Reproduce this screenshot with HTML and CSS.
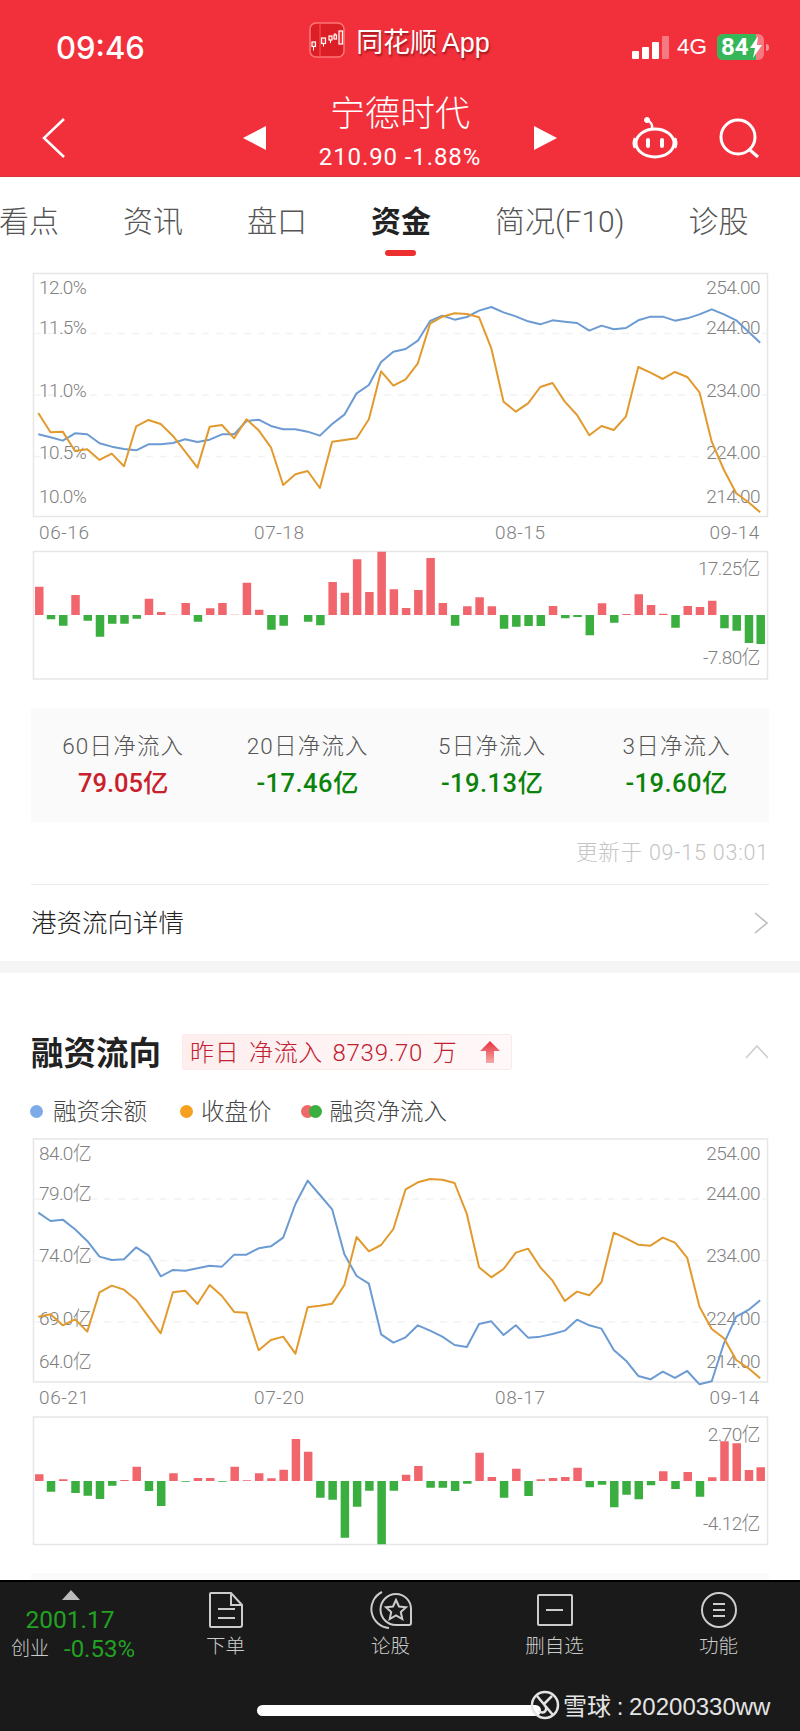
FILE: index.html
```html
<!DOCTYPE html>
<html lang="zh-CN">
<head>
    <meta charset="UTF-8">
    <title>宁德时代 资金</title>
    <link rel="stylesheet" href="styles.css">
</head>
<body>
<div class="page">
    <!--顶部红色区域-->
    <header class="top">
        <div class="status">
            <span class="time">09:46</span>
            <div class="app-name">
                <svg class="app-logo" width="36" height="36" viewBox="0 0 36 36">
                    <rect x="1" y="1" width="34" height="34" rx="6" fill="#dc1f26" stroke="#f77" stroke-width="1.5"/>
                    <path d="M11 1V35" stroke="#f55" stroke-width="1"/>
                    <g fill="#e33" stroke="#fff" stroke-width="1.200">
                        <rect x="3" y="20" width="3.500" height="4.500"/>
                        <rect x="12.500" y="16" width="4" height="5.500"/>
                        <rect x="20" y="14" width="3" height="4"/>
                        <rect x="25" y="13" width="2.500" height="4"/>
                        <rect x="30" y="9" width="3.500" height="13"/>
                    </g>
                    <path d="M4.500 24.500v4M14.500 21.500v3M21.500 18v3M26 11v2" stroke="#fff"/>
                </svg>
                <span class="app-text">同花顺 App</span>
            </div>
            <div class="signal">
                <div class="bars">
                    <i class="bar b1"></i><i class="bar b2"></i><i class="bar b3"></i><i class="bar b4"></i>
                </div>
                <span class="net">4G</span>
                <div class="battery">
                    <div class="battery-fill"></div>
                    <span class="battery-num">84</span>
                    <svg class="bolt" width="12" height="22" viewBox="0 0 12 22"><path d="M8 0L0 12h5L3 22l9-13H7z" fill="#fff"/></svg>
                </div>
                <i class="nub"></i>
            </div>
        </div>
        <div class="nav">
            <div class="nav-left">
                <svg width="26" height="42" viewBox="0 0 26 42"><path d="M23 2L3 21l20 19" fill="none" stroke="#fff" stroke-width="2.5"/></svg>
            </div>
            <div class="nav-mid">
                <i class="tri tri-l"></i>
                <div class="stock">
                    <div class="stock-name">宁德时代</div>
                    <div class="stock-price">210.90 -1.88%</div>
                </div>
                <i class="tri tri-r"></i>
            </div>
            <div class="nav-right">
                <svg width="48" height="44" viewBox="0 0 48 44" fill="none" stroke="#fff">
                    <ellipse cx="24" cy="27" rx="19" ry="14" stroke-width="3"/>
                    <path d="M21 13C22 9 20 6 16 4" stroke-width="2.500"/>
                    <circle cx="16" cy="4" r="2.500" fill="#fff"/>
                    <rect x="15" y="22" width="4" height="10" rx="2" fill="#fff" stroke="none"/>
                    <rect x="29" y="22" width="4" height="10" rx="2" fill="#fff" stroke="none"/>
                    <path d="M4 22q-2.500 5 0 10M44 22q2.500 5 0 10" stroke-width="2.500"/>
                </svg>
                <svg width="46" height="46" viewBox="0 0 46 46">
                    <circle cx="22" cy="22" r="17" fill="none" stroke="#fff" stroke-width="3"/>
                    <path d="M34 35l8 7" stroke="#fff" stroke-width="3"/>
                </svg>
            </div>
        </div>
    </header>

    <!--标签-->
    <nav class="tabs">
        <span class="tab">看点</span>
        <span class="tab">资讯</span>
        <span class="tab">盘口</span>
        <span class="tab current">资金</span>
        <span class="tab">简况(F10)</span>
        <span class="tab">诊股</span>
    </nav>

    <!--港资走势-->
    <svg class="chart" width="800" height="275" viewBox="0 0 800 275">
        <rect class="frame" x="33.5" y="8.5" width="734" height="243"/>
        <path class="grid" d="M34 68.5H767M34 130H767M34 191.5H767"/>
        <text class="axis" x="39" y="29">12.0%</text>
        <text class="axis" x="39" y="69">11.5%</text>
        <text class="axis" x="39" y="132">11.0%</text>
        <text class="axis" x="39" y="194">10.5%</text>
        <text class="axis" x="39" y="238">10.0%</text>
        <text class="axis end" x="760" y="29">254.00</text>
        <text class="axis end" x="760" y="69">244.00</text>
        <text class="axis end" x="760" y="132">234.00</text>
        <text class="axis end" x="760" y="194">224.00</text>
        <text class="axis end" x="760" y="238">214.00</text>
        <text class="axis date" x="39" y="273.500">06-16</text>
        <text class="axis date" x="254" y="273.500">07-18</text>
        <text class="axis date" x="495" y="273.500">08-15</text>
        <text class="axis date end" x="760" y="273.500">09-14</text>
        <g transform="scale(.5102 .3333)">
            <polyline class="line blue" points="75,508 99,517 123,527 147,505 171,508 195,535 219,545 243,552 267,556 291,538 315,538 339,534 363,523 387,531 411,524 435,508 459,508 483,468 507,464 531,483 555,493 579,493 603,500 627,512 651,477 675,449 699,385 723,360 747,291 771,260 795,252 819,227 843,168 867,152 891,164 915,156 939,137 963,126 987,142 1011,154 1035,169 1059,178 1083,166 1107,170 1131,174 1155,197 1179,182 1203,193 1227,189 1251,166 1275,155 1299,155 1323,167 1347,160 1371,148 1395,133 1419,148 1443,166 1467,200 1490,233"/>
            <polyline class="line orange" points="75,444 99,502 123,500 147,558 171,553 195,585 219,566 243,604 267,484 291,465 315,477 339,513 363,560 387,608 411,485 435,480 459,520 483,463 507,496 531,547 555,660 579,628 603,618 627,669 651,530 675,525 699,520 723,463 747,319 771,362 795,343 819,295 843,176 867,155 891,145 915,147 939,157 963,250 987,410 1011,440 1035,415 1059,366 1083,354 1107,410 1131,450 1155,511 1179,483 1203,495 1227,454 1251,306 1275,323 1299,342 1323,321 1347,336 1371,382 1395,530 1419,615 1443,685 1467,712 1490,742"/>
        </g>
    </svg>
    <svg class="chart" width="800" height="150" viewBox="0 0 800 150">
        <rect class="frame" x="33.5" y="11.5" width="734" height="127.5"/>
        <g transform="scale(.5102 .3333)">
            <path class="vol red" d="M77 225V140M148 225V165M292 225V176M316 225V216M364 225V189M412 225V205M436 225V189M484 225V128M508 225V209M652 225V126M676 225V158M700 225V58M724 225V156M748 225V35M772 225V148M796 225V204M820 225V150M844 225V54M868 225V189M916 225V199M940 225V172M964 225V199M1084 225V198M1180 225V190M1228 225V222M1252 225V163M1276 225V195M1300 225V221M1348 225V198M1372 225V201M1396 225V182"/>
            <path class="vol pale" d="M340 225V223M460 225V222"/>
            <path class="vol green" d="M100 225V238M124 225V257M172 225V242M196 225V290M220 225V251M244 225V251M268 225V236M388 225V245M532 225V269M556 225V257M604 225V245M628 225V256M892 225V257M988 225V266M1012 225V260M1036 225V258M1060 225V258M1108 225V235M1132 225V231M1156 225V286M1204 225V248M1324 225V263M1420 225V265M1444 225V272M1468 225V309M1491 225V312"/>
        </g>
        <text class="axis end" x="760" y="35">17.25亿</text>
        <text class="axis end" x="760" y="124">-7.80亿</text>
    </svg>

    <section class="stats">
        <div class="stat"><div class="stat-name">60日净流入</div><div class="stat-val up">79.05亿</div></div>
        <div class="stat"><div class="stat-name">20日净流入</div><div class="stat-val down">-17.46亿</div></div>
        <div class="stat"><div class="stat-name">5日净流入</div><div class="stat-val down">-19.13亿</div></div>
        <div class="stat"><div class="stat-name">3日净流入</div><div class="stat-val down">-19.60亿</div></div>
    </section>
    <div class="updated">更新于 09-15 03:01</div>
    <div class="detail">
        <span>港资流向详情</span>
        <svg width="16" height="22" viewBox="0 0 16 22"><path d="M2 1l12 10L2 21" fill="none" stroke="#bbb" stroke-width="1.5"/></svg>
    </div>
    <div class="sep"></div>

    <!--融资流向-->
    <div class="sec-head">
        <h2 class="sec-title">融资流向</h2>
        <div class="tag">
            <span>昨日 净流入 8739.70 万</span>
            <svg width="20" height="22" viewBox="0 0 20 22">
                <defs><linearGradient id="arrowFill" x1="0" y1="0" x2="0" y2="1"><stop offset="0" stop-color="#e8303a"/><stop offset="1" stop-color="#f6aaaa"/></linearGradient></defs>
                <path d="M10 0l10 10h-6v12H6V10H0z" fill="url(#arrowFill)"/>
            </svg>
        </div>
        <svg class="fold" width="24" height="14" viewBox="0 0 24 14"><path d="M1 13L12 1l11 12" fill="none" stroke="#ccc" stroke-width="1.5"/></svg>
    </div>
    <div class="legend">
        <span class="leg"><i class="dot c-blue"></i>融资余额</span>
        <span class="leg"><i class="dot c-orange"></i>收盘价</span>
        <span class="leg leg-net"><i class="dot c-red"></i><i class="dot c-green"></i>融资净流入</span>
    </div>
    <svg class="chart" width="800" height="280" viewBox="0 0 800 280">
        <rect class="frame" x="33.5" y="9" width="734" height="243"/>
        <path class="grid" d="M34 69H767M34 130.5H767M34 192H767"/>
        <text class="axis" x="39" y="30">84.0亿</text>
        <text class="axis" x="39" y="70">79.0亿</text>
        <text class="axis" x="39" y="132">74.0亿</text>
        <text class="axis" x="39" y="195">69.0亿</text>
        <text class="axis" x="39" y="238">64.0亿</text>
        <text class="axis end" x="760" y="30">254.00</text>
        <text class="axis end" x="760" y="70">244.00</text>
        <text class="axis end" x="760" y="132">234.00</text>
        <text class="axis end" x="760" y="195">224.00</text>
        <text class="axis end" x="760" y="238">214.00</text>
        <text class="axis date" x="39" y="273.500">06-21</text>
        <text class="axis date" x="254" y="273.500">07-20</text>
        <text class="axis date" x="495" y="273.500">08-17</text>
        <text class="axis date end" x="760" y="273.500">09-14</text>
        <g transform="scale(.5102 .3333)">
            <polyline class="line blue" points="75,248 99,273 123,269 147,298 171,333 195,380 219,390 243,388 267,352 291,376 315,439 339,420 363,422 387,415 411,407 435,410 459,374 483,374 507,355 531,349 555,323 579,222 603,152 627,195 651,238 675,373 699,438 723,461 747,613 771,638 795,622 819,586 843,602 867,620 891,645 915,651 939,582 963,574 987,615 1011,586 1035,623 1059,620 1083,612 1107,602 1131,569 1155,586 1179,596 1203,660 1227,692 1251,738 1275,748 1299,725 1323,744 1347,723 1371,763 1395,754 1419,640 1443,560 1467,540 1490,511"/>
            <polyline class="line orange" points="75,560 99,553 123,586 147,568 171,605 195,487 219,467 243,479 267,510 291,560 315,610 339,487 363,482 387,522 411,465 435,498 459,546 483,548 507,661 531,630 555,620 579,671 603,532 627,527 651,521 675,465 699,321 723,364 747,345 771,297 795,178 819,157 843,147 867,149 891,159 915,252 939,412 963,442 987,417 1011,368 1035,356 1059,412 1083,452 1107,513 1131,485 1155,496 1179,456 1203,308 1227,325 1251,344 1275,347 1299,323 1323,338 1347,384 1371,530 1395,597 1419,625 1443,690 1467,715 1490,745"/>
        </g>
    </svg>
    <svg class="chart" width="800" height="150" viewBox="0 0 800 150">
        <rect class="frame" x="33.5" y="7" width="734" height="127.5"/>
        <g transform="scale(.5102 .3333)">
            <path class="vol red" d="M77 213V193M124 213V208M244 213V210M268 213V170M340 213V190M388 213V204M412 213V204M460 213V170M484 213V211M508 213V190M532 213V205M556 213V179M580 213V87M604 213V125M796 213V194M820 213V168M940 213V128M964 213V201M1012 213V176M1060 213V208M1084 213V204M1108 213V201M1132 213V173M1300 213V184M1348 213V186M1396 213V202M1420 213V94M1444 213V100M1468 213V180M1491 213V172"/>
            <path class="vol green" d="M100 213V245M148 213V249M172 213V257M196 213V267M220 213V227M292 213V243M316 213V288M364 213V215M436 213V215M628 213V263M652 213V269M676 213V383M700 213V290M724 213V242M748 213V403M772 213V242M844 213V233M868 213V233M892 213V243M916 213V221M988 213V263M1036 213V258M1156 213V232M1180 213V224M1204 213V292M1228 213V254M1252 213V268M1276 213V226M1324 213V237M1372 213V260"/>
        </g>
        <text class="axis end" x="760" y="31">2.70亿</text>
        <text class="axis end" x="760" y="120">-4.12亿</text>
    </svg>
    <div class="fade"></div>

    <!--底部工具栏-->
    <footer class="toolbar">
        <div class="quote">
            <i class="quote-tri"></i>
            <div class="quote-num">2001.17</div>
            <div class="quote-row"><span class="quote-name">创业</span><span class="quote-pct">-0.53%</span></div>
        </div>
        <div class="tool">
            <svg width="36" height="38" viewBox="0 0 36 38" fill="none" stroke="#ccc" stroke-width="2">
                <path d="M3 2H23L34 14V34a2 2 0 0 1-2 2H3a1 1 0 0 1-1-1V3a1 1 0 0 1 1-1z"/>
                <path d="M23 2V14H34"/>
                <path d="M10 18H27M10 27H27"/>
            </svg>
            <span>下单</span>
        </div>
        <div class="tool">
            <svg width="42" height="38" viewBox="0 0 42 38" fill="none" stroke="#ccc" stroke-width="2">
                <path d="M26 3a15 15 0 0 0 0 31H39a2 2 0 0 0 2-2V18A15 15 0 0 0 26 3z"/>
                <path d="M12 1A19 19 0 0 0 19 37"/>
                <path d="M26 9l3 6.500 7 .8-5.200 4.700 1.500 7-6.300-3.600-6.300 3.600 1.500-7-5.200-4.700 7-.8z"/>
            </svg>
            <span>论股</span>
        </div>
        <div class="tool">
            <svg width="38" height="38" viewBox="0 0 38 38" fill="none" stroke="#ccc" stroke-width="2">
                <rect x="2" y="4" width="34" height="30" rx="1"/>
                <path d="M10 19H27"/>
            </svg>
            <span>删自选</span>
        </div>
        <div class="tool">
            <svg width="38" height="38" viewBox="0 0 38 38" fill="none" stroke="#ccc" stroke-width="2">
                <circle cx="19" cy="19" r="17"/>
                <path d="M13 13H25M13 19H25M13 25H25"/>
            </svg>
            <span>功能</span>
        </div>
        <i class="home-bar"></i>
        <div class="mark">
            <svg width="30" height="30" viewBox="0 0 30 30" fill="none" stroke="#e4e4e4" stroke-width="2.500">
                <circle cx="15" cy="15" r="13"/>
                <path d="M7 6L23 25M22 6L13 15M14 15a4 4 0 1 1-5 6"/>
            </svg>
            <span>雪球 : 20200330ww</span>
        </div>
    </footer>
</div>
</body>
</html>
```

FILE: styles.css
```css
html,body{
    margin:0;
    padding:0;
    background:#fff;
}
body{
    font-family:Roboto,"Noto Sans CJK SC",sans-serif;
}
i{
    display:block;
}
.page{
    position:relative;
    width:800px;
    height:1731px;
    overflow:hidden;
}

/* 顶部 */
.top{
    height:177px;
    background:#f2303c;
    color:#fff;
    box-shadow:inset 0 -1px 0 #d8333c;
}
.status{
    display:flex;
    align-items:center;
    justify-content:space-between;
    height:94px;
    padding:0 31px 0 56px;
    box-sizing:border-box;
}
.time{
    font-family:Inter,Roboto,sans-serif;
    font-size:31px;
    font-weight:500;
}
.app-name{
    display:flex;
    align-items:center;
    gap:11px;
    margin:-14px 0 0 22px;
}
.app-text{
    font-family:"Liberation Sans","Noto Sans CJK SC",sans-serif;
    font-size:27px;
    word-spacing:-3px;
    text-shadow:1px 2px 2px rgba(80,0,0,.55);
}
.signal{
    display:flex;
    align-items:center;
}
.bars{
    display:flex;
    align-items:flex-end;
    gap:3px;
    height:24px;
    margin-right:8px;
}
.bar{
    width:7px;
    background:#fff;
    border-radius:1px;
}
.b1{height:8px;}
.b2{height:12px;}
.b3{height:17px;}
.b4{height:23px;background:rgba(255,255,255,.35);}
.net{
    font-family:"Liberation Sans",sans-serif;
    font-size:22.5px;
    margin-right:10px;
}
.battery{
    position:relative;
    width:47px;
    height:26px;
    border-radius:6px;
    background:rgba(255,255,255,.35);
    overflow:hidden;
}
.battery-fill{
    width:39px;
    height:26px;
    background:#35b658;
}
.battery-num{
    position:absolute;
    left:4px;
    top:-2px;
    font-size:24px;
    font-weight:700;
    line-height:30px;
}
.bolt{
    position:absolute;
    left:33px;
    top:2px;
}
.nub{
    width:3px;
    height:7px;
    margin-left:2px;
    background:rgba(255,255,255,.45);
    border-radius:0 3px 3px 0;
}
.nav{
    display:grid;
    grid-template-columns:1fr auto 1fr;
    align-items:center;
    height:83px;
}
.nav-left{
    padding-left:41px;
    line-height:0;
}
.nav-mid{
    display:flex;
    align-items:center;
    gap:50px;
}
.tri{
    width:0;
    height:0;
    border-top:12px solid transparent;
    border-bottom:12px solid transparent;
}
.tri-l{border-right:23px solid #fff;}
.tri-r{border-left:23px solid #fff;}
.stock{
    width:168px;
    margin-bottom:9px;
    text-align:center;
}
.stock-name{
    font-size:35px;
    line-height:42px;
    font-weight:300;
    white-space:nowrap;
}
.stock-price{
    margin-top:6px;
    font-size:24px;
    line-height:30px;
    letter-spacing:.9px;
    white-space:nowrap;
}
.nav-right{
    display:flex;
    justify-content:flex-end;
    align-items:center;
    gap:37px;
    padding-right:38px;
}

/* 标签 */
.tabs{
    display:flex;
    gap:64px;
    height:88px;
    margin-left:-1px;
    padding-top:24px;
    box-sizing:border-box;
    font-size:30px;
    line-height:42px;
    font-weight:300;
    color:#555;
    white-space:nowrap;
}
.tab{
    position:relative;
}
.tab.current{
    color:#222;
    font-weight:700;
}
.tab.current:after{
    content:"";
    position:absolute;
    left:14px;
    top:49px;
    width:31px;
    height:6px;
    border-radius:3px;
    background:#ee2f2f;
}

/* 图表 */
.chart{
    display:block;
    overflow:visible;
    font-family:Roboto,"Noto Sans CJK SC",sans-serif;
}
.frame{
    fill:none;
    stroke:#e6e6e6;
    stroke-width:1.500;
}
.grid{
    fill:none;
    stroke:#f2f2f2;
    stroke-width:1.500;
    stroke-dasharray:7 7;
}
.axis{
    font-size:19px;
    font-weight:300;
    letter-spacing:-.6px;
    fill:#808080;
}
.date{
    letter-spacing:.6px;
}
.end{
    text-anchor:end;
}
.line{
    fill:none;
    stroke-width:2px;
    vector-effect:non-scaling-stroke;
    stroke-linejoin:round;
}
.blue{stroke:#6b9bd2;}
.orange{stroke:#e29a2e;}
.vol{
    fill:none;
    stroke-width:8.500px;
    vector-effect:non-scaling-stroke;
}
.red{stroke:#f0666c;}
.pale{stroke:#f8d8d8;}
.green{stroke:#3aae3e;}

/* 净流入 */
.stats{
    display:grid;
    grid-template-columns:repeat(4,1fr);
    width:738px;
    height:114px;
    margin:18px 0 0 31px;
    padding-top:21px;
    box-sizing:border-box;
    background:#fafafa;
    text-align:center;
}
.stat-name{
    font-size:22.500px;
    line-height:34px;
    font-weight:300;
    letter-spacing:1.2px;
    color:#555;
}
.stat-val{
    margin-top:1px;
    font-size:25.500px;
    line-height:38px;
    font-weight:500;
}
.up{color:#c9202c;}
.down{color:#0b830b;letter-spacing:.5px;}
.updated{
    width:738px;
    margin-left:31px;
    padding-top:16px;
    text-align:right;
    font-size:21.500px;
    line-height:30px;
    font-weight:300;
    letter-spacing:.8px;
    color:#c4c4c4;
}
.detail{
    display:flex;
    align-items:center;
    justify-content:space-between;
    width:738px;
    height:77px;
    margin:16px 0 0 31px;
    padding-bottom:6px;
    border-top:1px solid #eaeaea;
    box-sizing:border-box;
    font-size:25.500px;
    font-weight:300;
    color:#222;
}
.detail svg{
    margin-top:6px;
}
.sep{
    height:12px;
    background:#f5f5f5;
}

/* 融资流向 */
.sec-head{
    display:flex;
    align-items:center;
    width:738px;
    height:36px;
    margin:61px 0 0 31px;
}
.sec-title{
    margin:-4px 0 0;
    width:151px;
    font-size:32.500px;
    font-weight:700;
    white-space:nowrap;
    color:#222;
}
.tag{
    display:flex;
    align-items:center;
    justify-content:space-between;
    width:330px;
    height:36px;
    padding:0 11px 3px 7px;
    box-sizing:border-box;
    border:1px solid #fbeaea;
    border-radius:3px;
    background:linear-gradient(90deg,#feeeee,#fff8f8);
    font-size:24px;
    font-weight:300;
    letter-spacing:.7px;
    word-spacing:3px;
    color:#c02030;
    white-space:nowrap;
}
.tag svg{
    margin-top:3px;
}
.fold{
    margin-left:auto;
}
.legend{
    display:flex;
    gap:33px;
    height:37px;
    margin:23px 0 0 32px;
    font-size:23.500px;
    line-height:36px;
    font-weight:300;
    color:#444;
}
.leg{
    display:flex;
    align-items:center;
}
.leg-net{
    margin-left:-4px;
}
.dot{
    width:13px;
    height:13px;
    margin-right:8px;
    border-radius:50%;
}
.c-blue{background:#7cabe8;margin-left:-2px;margin-right:10px;}
.c-orange{background:#f5a020;}
.c-red{background:#ee6a6a;margin-right:-5px;}
.c-green{background:#3aae3e;margin-right:8px;}
.fade{
    height:7px;
    margin:13px 31px 0;
    background:#fafafa;
}

/* 底部 */
.toolbar{
    position:relative;
    display:grid;
    grid-template-columns:142px 167px 163px 165px 163px;
    height:151px;
    border-top:2px solid #000;
    box-sizing:border-box;
    background:#1a1a1a;
    color:#ccc;
}
.quote{
    padding-top:8px;
    text-align:center;
}
.quote-tri{
    width:0;
    height:0;
    margin:0 auto;
    border-left:9px solid transparent;
    border-right:9px solid transparent;
    border-bottom:10px solid #bbb;
}
.quote-num{
    margin:4px 0 0 -2px;
    font-size:24.500px;
    line-height:32px;
    color:#22a222;
}
.quote-row{
    display:flex;
    justify-content:center;
    gap:15px;
    margin:-2px 0 0 4px;
    font-size:24px;
    line-height:30px;
    white-space:nowrap;
}
.quote-name{
    font-size:19px;
    font-weight:300;
}
.quote-pct{
    color:#22a222;
}
.tool{
    display:flex;
    flex-direction:column;
    align-items:center;
    padding-top:9px;
    font-size:19.500px;
    line-height:26px;
    font-weight:300;
}
.tool svg{
    margin-bottom:5px;
}
.home-bar{
    position:absolute;
    left:257px;
    top:123px;
    width:284px;
    height:11px;
    border-radius:6px;
    background:#fff;
}
.mark{
    position:absolute;
    left:530px;
    top:105px;
    display:flex;
    align-items:center;
    gap:3px;
    font-family:"Liberation Sans","Noto Sans CJK SC",sans-serif;
    font-size:24px;
    word-spacing:-1px;
    color:#e4e4e4;
    white-space:nowrap;
}
```
